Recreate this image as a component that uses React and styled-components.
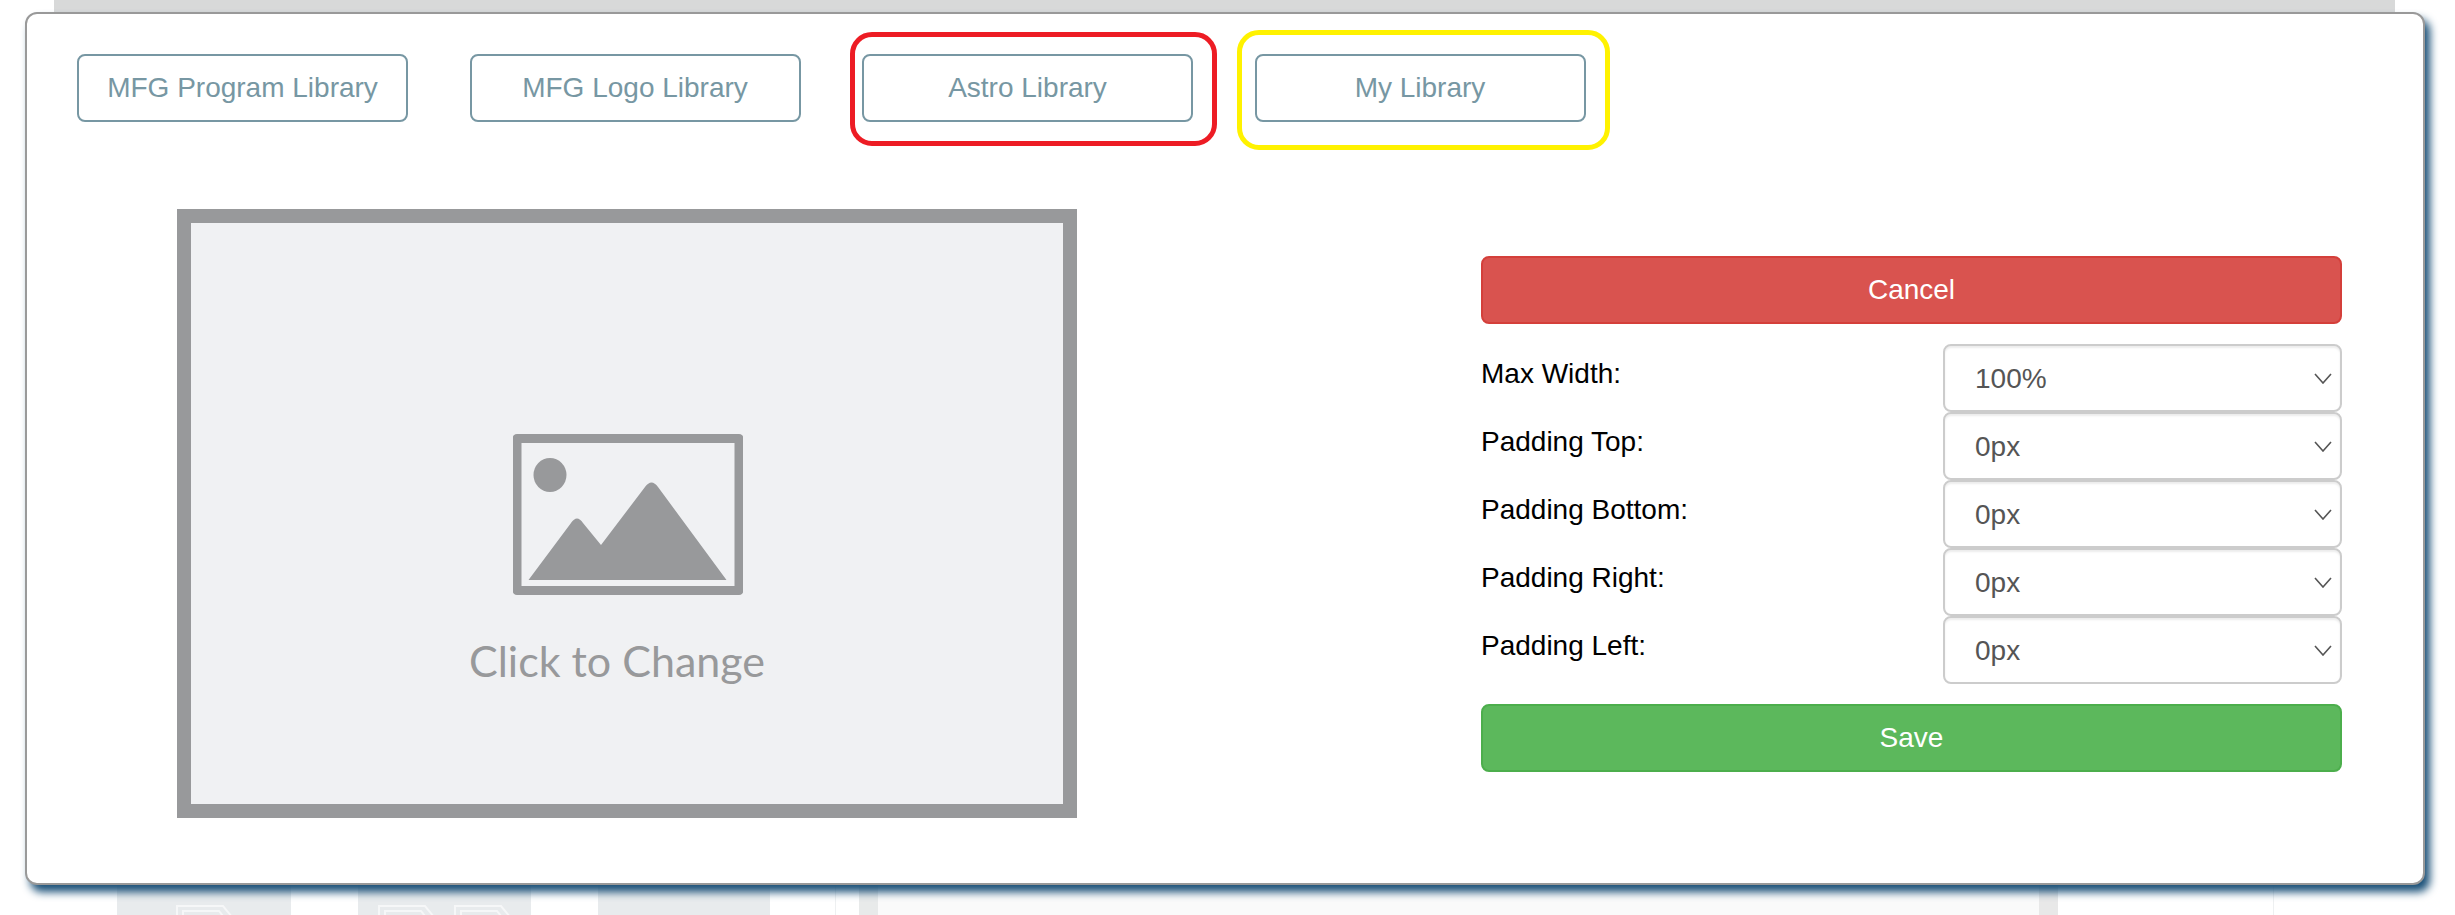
import React from 'react';
import styled, { createGlobalStyle } from 'styled-components';

const GlobalStyle = createGlobalStyle`
  html, body {
    margin: 0;
    padding: 0;
    background: #fff;
  }
  body {
    font-family: "Liberation Sans", Arial, sans-serif;
    font-size: 28px;
    line-height: 40px;
    color: #000;
  }
`;

const Page = styled.div`
  position: relative;
  width: 2455px;
  height: 915px;
  overflow: hidden;
  display: flex;
  flex-direction: column;
  justify-content: space-between;
`;

const TopStrip = styled.div`
  height: 12px;
  margin: 0 60px 0 54px;
  background: #d8d9d9;
`;

const BottomRow = styled.div`
  height: 30px;
  display: flex;
  padding-left: 117px;
  background: linear-gradient(to right, #fff 878px, #fafafa 878px, #fafafa 2058px, #fff 2058px);
`;

const Tile = styled.div`
  width: ${p => p.$width}px;
  margin-right: ${p => p.$gap}px;
  display: flex;
  justify-content: center;
  gap: 19px;
  background: #e8ebed;
`;

const Rule = styled.div`
  width: ${p => p.$width}px;
  margin-right: ${p => p.$gap}px;
  background: ${p => p.$color};
`;

const Modal = styled.div`
  position: absolute;
  top: 12px;
  left: 25px;
  width: 2400px;
  height: 873px;
  box-sizing: border-box;
  border: 2px solid #999;
  border-radius: 12px;
  background: #fff;
  box-shadow: 5px 7px 9px #1a5078;
  padding: 40px 0 0 50px;
`;

const LibraryBar = styled.div`
  display: flex;
  gap: 61.5px;
`;

const LibraryButton = styled.button`
  position: relative;
  width: 331px;
  height: 68px;
  padding: 0;
  background: #fff;
  border: 2px solid #7797a3;
  border-radius: 8px;
  color: #7797a3;
  font: inherit;
`;

const Ring = styled.span`
  position: absolute;
  top: ${p => p.$top}px;
  right: ${p => p.$right}px;
  bottom: ${p => p.$bottom}px;
  left: ${p => p.$left}px;
  border: 5px solid ${p => p.$color};
  border-radius: 22px;
`;

const Body = styled.div`
  display: flex;
  margin-top: 87px;
  padding-left: 100px;
`;

const Placeholder = styled.div`
  width: 900px;
  height: 609px;
  box-sizing: border-box;
  border: 14px solid #98999b;
  background: #f0f1f3;
  padding-top: 211px;
  display: flex;
  flex-direction: column;
  align-items: center;
`;

const PictureIcon = styled.svg`
  display: block;
  width: 230px;
  height: 161px;
  margin-left: 2px;
`;

const ChangeText = styled.div`
  margin-top: 41px;
  margin-right: 20px;
  font-family: Lato, "Open Sans", sans-serif;
  font-size: 43px;
  line-height: 50px;
  color: #98999b;
`;

const Controls = styled.div`
  width: 861px;
  margin: 47px 0 0 404px;
`;

const ActionButton = styled.button`
  display: block;
  width: 100%;
  height: 68px;
  padding: 0;
  border: 2px solid ${p => p.$border};
  border-radius: 8px;
  background: ${p => p.$bg};
  color: #fff;
  font: inherit;
`;

const Fields = styled.div`
  margin: 20px 0;
`;

const FieldRow = styled.div`
  display: flex;
  justify-content: space-between;
  height: 68px;
`;

const FieldLabel = styled.label`
  padding-top: 10px;
`;

const SelectWrap = styled.div`
  position: relative;
  width: 399px;
  height: 68px;
`;

const FieldSelect = styled.select`
  appearance: none;
  display: block;
  width: 100%;
  height: 100%;
  box-sizing: border-box;
  padding: 12px 40px 11px 30px;
  border: 2px solid #ccc;
  border-radius: 8px;
  background: #fff;
  box-shadow: inset 0 2px 2px rgba(0, 0, 0, 0.075);
  color: #555;
  font: inherit;
`;

const Chevron = styled.svg`
  position: absolute;
  top: 29px;
  right: 10px;
  width: 18px;
  height: 11px;
  pointer-events: none;
`;

const DocIcon = styled.svg`
  width: 57px;
  height: 30px;
  margin-top: 20px;
`;

const Doc = () => (
  <DocIcon viewBox="0 0 57 30">
    <path d="M1 30V1h46l9 11M7 30V6h36l8 10" fill="none" stroke="#f6f7f8" strokeWidth="2" />
  </DocIcon>
);

const libraries = [
  { name: 'MFG Program Library' },
  { name: 'MFG Logo Library' },
  { name: 'Astro Library', ring: { color: '#ed1c24', top: -24, right: -26, bottom: -26, left: -14 } },
  { name: 'My Library', ring: { color: '#fff200', top: -26, right: -26, bottom: -30, left: -20 } },
];

const fields = [
  { label: 'Max Width:', value: '100%' },
  { label: 'Padding Top:', value: '0px' },
  { label: 'Padding Bottom:', value: '0px' },
  { label: 'Padding Right:', value: '0px' },
  { label: 'Padding Left:', value: '0px' },
];

export default function App() {
  return (
    <Page>
      <GlobalStyle />
      <TopStrip />
      <BottomRow>
        <Tile $width={174} $gap={67}><Doc /></Tile>
        <Tile $width={173} $gap={67}><Doc /><Doc /></Tile>
        <Tile $width={172} $gap={65} />
        <Rule $width={1} $gap={23} $color="#eef0f1" />
        <Rule $width={19} $gap={1161} $color="#e8eaea" />
        <Rule $width={19} $gap={215} $color="#e8e8e8" />
        <Rule $width={1} $gap={0} $color="#eef0f1" />
      </BottomRow>
      <Modal>
        <LibraryBar>
          {libraries.map(lib => (
            <LibraryButton key={lib.name}>
              {lib.name}
              {lib.ring && <Ring $color={lib.ring.color} $top={lib.ring.top} $right={lib.ring.right} $bottom={lib.ring.bottom} $left={lib.ring.left} />}
            </LibraryButton>
          ))}
        </LibraryBar>
        <Body>
          <Placeholder>
            <PictureIcon viewBox="0 0 230 161">
              <rect x="4" y="4.5" width="222" height="152" fill="none" stroke="#98999b" strokeWidth="9" strokeLinejoin="round" />
              <ellipse cx="37" cy="41" rx="16.5" ry="17" fill="#98999b" />
              <path d="M15.5 146 L58 89 Q64 80 70 89 L88 111 L132 53 Q138.5 44 145 53 L213.5 146 Z" fill="#98999b" />
            </PictureIcon>
            <ChangeText>Click to Change</ChangeText>
          </Placeholder>
          <Controls>
            <ActionButton $bg="#d9534f" $border="#d43f3a">Cancel</ActionButton>
            <Fields>
              {fields.map(field => (
                <FieldRow key={field.label}>
                  <FieldLabel>{field.label}</FieldLabel>
                  <SelectWrap>
                    <FieldSelect defaultValue={field.value}>
                      <option>{field.value}</option>
                    </FieldSelect>
                    <Chevron viewBox="0 0 18 11">
                      <path d="M1 1l8 9 8-9" fill="none" stroke="#555" strokeWidth="1.6" />
                    </Chevron>
                  </SelectWrap>
                </FieldRow>
              ))}
            </Fields>
            <ActionButton $bg="#5cb85c" $border="#4cae4c">Save</ActionButton>
          </Controls>
        </Body>
      </Modal>
    </Page>
  );
}
